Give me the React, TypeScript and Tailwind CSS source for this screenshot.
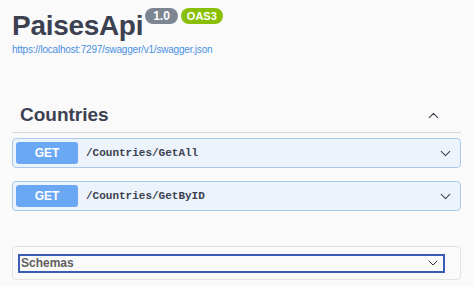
import { ChevronDown, ChevronUp } from "lucide-react";

const ops = ["/Countries/GetAll", "/Countries/GetByID"];

export default function App() {
  return (
    <div
      className="w-[474px] h-[287px] bg-[#fafafa] overflow-hidden text-[#3b4151]"
      style={{ fontFamily: '"Liberation Sans", Arial, sans-serif' }}
    >
      {/* Info header */}
      <div className="pl-3 pt-[6px]">
        <div className="flex items-start">
          <h1 className="text-[28px] leading-[40px] font-bold tracking-[-0.3px]">PaisesApi</h1>
          <div className="flex gap-[3px] mt-[2px] ml-[2px]">
            <span className="h-[16px] px-[8px] rounded-full bg-[#7d8492] text-white text-[12px] font-bold leading-[16px]">
              1.0
            </span>
            <span className="h-[16px] px-[6px] rounded-full bg-[#89bf04] text-white text-[11px] font-bold leading-[16px]">
              OAS3
            </span>
          </div>
        </div>
        <div className="text-[10px] leading-[12px] text-[#4990e2] -mt-[2px] tracking-[-0.2px]">
          https://localhost:7297/swagger/v1/swagger.json
        </div>
      </div>

      {/* Tag section */}
      <div className="mt-[42px] mx-3 w-[449px]">
        <div className="flex items-center justify-between h-[35px] pl-2 pr-[19px] border-b border-[#d5d8dc]">
          <h3 className="text-[19px] font-bold">Countries</h3>
          <ChevronUp className="w-[17px] h-[17px]" strokeWidth={1.5} />
        </div>
        <div className="flex flex-col gap-[13px] mt-[5px]">
          {ops.map((p) => (
            <div
              key={p}
              className="h-[30px] flex items-center px-[3px] rounded-[4px] border border-[#a9c9ea] bg-[#ecf3fb]"
            >
              <span className="w-[62px] h-[22px] rounded-[3px] bg-[#6aa8f4] text-white text-[12px] font-bold flex items-center justify-center">
                GET
              </span>
              <span
                className="ml-[8px] text-[11px] font-bold text-[#3b4151] flex-1"
                style={{ fontFamily: '"Liberation Mono", "Courier New", monospace' }}
              >
                {p}
              </span>
              <ChevronDown className="w-[17px] h-[17px] mr-[3px]" strokeWidth={1.5} />
            </div>
          ))}
        </div>
      </div>

      {/* Schemas */}
      <div className="mt-[35px] mx-3 w-[449px] h-[34px] rounded-[4px] border border-[#e3e3e3] bg-[#fafafa] flex items-center pl-[5px]">
        <div className="w-[427px] h-[19px] border-2 border-[#3a5bb5] flex items-center justify-between pl-[1px] pr-[2px]">
          <span className="text-[12px] font-bold text-[#606060]">Schemas</span>
          <ChevronDown className="w-[16px] h-[16px] text-[#333]" strokeWidth={1.5} />
        </div>
      </div>
    </div>
  );
}
